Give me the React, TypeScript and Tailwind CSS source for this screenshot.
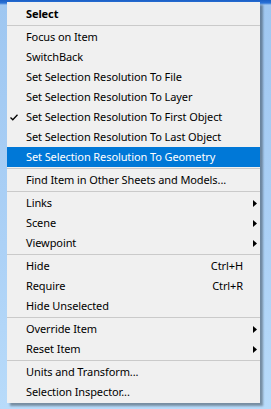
import React from 'react';

type Item =
  | { sep: true }
  | { label: string; bold?: boolean; checked?: boolean; active?: boolean; shortcut?: string; sub?: boolean };

const items: Item[] = [
  { label: 'Select', bold: true },
  { sep: true },
  { label: 'Focus on Item' },
  { label: 'SwitchBack' },
  { label: 'Set Selection Resolution To File' },
  { label: 'Set Selection Resolution To Layer' },
  { label: 'Set Selection Resolution To First Object', checked: true },
  { label: 'Set Selection Resolution To Last Object' },
  { label: 'Set Selection Resolution To Geometry', active: true },
  { sep: true },
  { label: 'Find Item in Other Sheets and Models...' },
  { sep: true },
  { label: 'Links', sub: true },
  { label: 'Scene', sub: true },
  { label: 'Viewpoint', sub: true },
  { sep: true },
  { label: 'Hide', shortcut: 'Ctrl+H' },
  { label: 'Require', shortcut: 'Ctrl+R' },
  { label: 'Hide Unselected' },
  { sep: true },
  { label: 'Override Item', sub: true },
  { label: 'Reset Item', sub: true },
  { sep: true },
  { label: 'Units and Transform...' },
  { label: 'Selection Inspector...' },
];

function Check() {
  return (
    <svg width="8" height="7" viewBox="0 0 8 7" className="absolute left-[3px] top-[7px]">
      <path d="M0.5 3.5 L2.8 5.8 L7.5 0.8" fill="none" stroke="#000" strokeWidth="1.3" />
    </svg>
  );
}

function Arrow() {
  return (
    <svg width="4" height="7" viewBox="0 0 4 7" className="absolute right-[3px] top-[7px]">
      <path d="M0 0 L4 3.5 L0 7 Z" fill="#000" />
    </svg>
  );
}

export default function App() {
  return (
    <div
      className="w-[271px] h-[409px] overflow-hidden pt-[2px] pl-[7px] bg-[linear-gradient(to_bottom,#1b5fc6_0px,#2a72d6_3px,#9fc7f1_5px,#acd1f6_60%,#b8dbfa_100%)]"
      style={{ fontFamily: '"Noto Sans", "Open Sans", sans-serif' }}
    >
      <div className="w-[253px] bg-[#f0f0f0] pt-[2px] pb-[1px] shadow-[3px_3px_2px_rgba(0,0,0,0.35)] text-[11px] tracking-[-0.1px] text-[#000]">
        {items.map((it, i) =>
          'sep' in it ? (
            <div key={i} className="h-[3px] flex items-center">
              <div className="h-px w-full bg-[#cacaca]" />
            </div>
          ) : (
            <div
              key={i}
              className={`relative h-[20px] flex items-center pl-[19px] pr-[17px] leading-none ${
                it.active ? 'bg-[#0078d7] text-white' : ''
              } ${it.bold ? 'font-bold' : ''}`}
            >
              {it.checked && <Check />}
              <span className="flex-1 whitespace-nowrap -translate-y-px">{it.label}</span>
              {it.shortcut && <span className="whitespace-nowrap -translate-y-px">{it.shortcut}</span>}
              {it.sub && <Arrow />}
            </div>
          )
        )}
      </div>
    </div>
  );
}
